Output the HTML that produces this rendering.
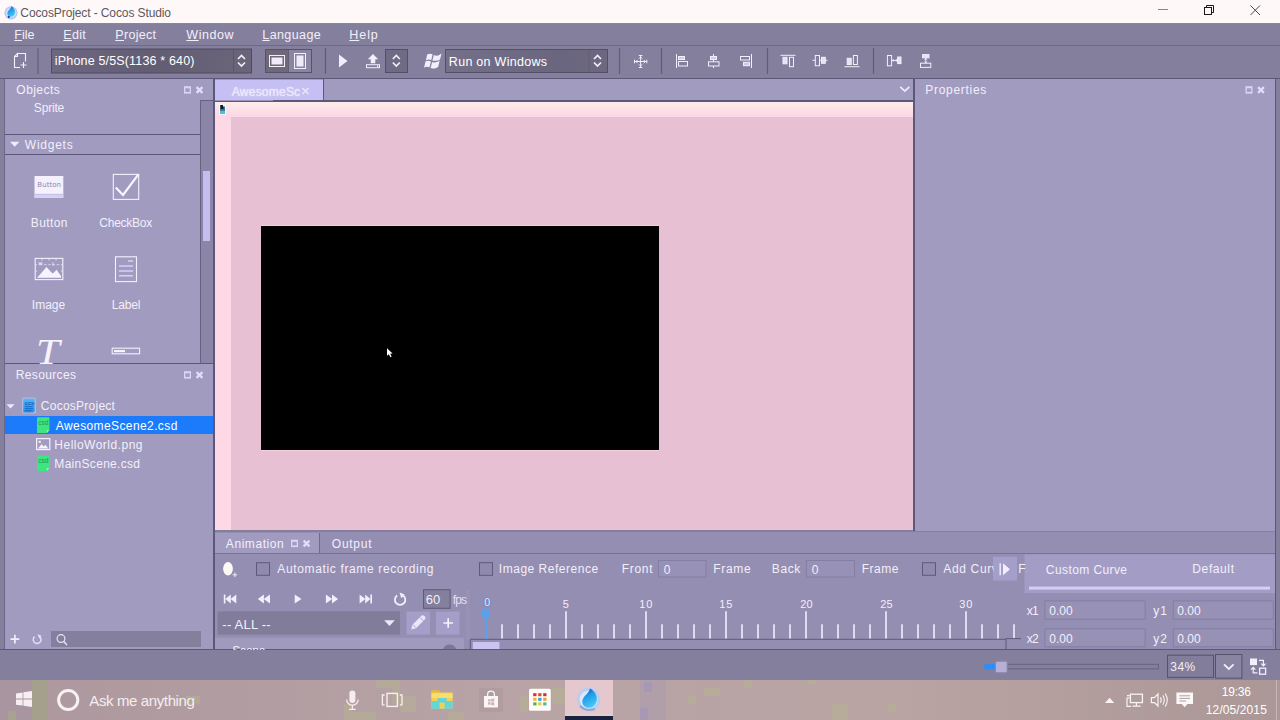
<!DOCTYPE html>
<html><head><meta charset="utf-8"><title>CocosProject - Cocos Studio</title>
<style>
html,body{margin:0;padding:0;}
body{width:1280px;height:720px;position:relative;overflow:hidden;background:#857f9e;font-family:"Liberation Sans",sans-serif;}
.b{position:absolute;}
.t{position:absolute;white-space:nowrap;}
svg{position:absolute;overflow:visible;}
u{text-decoration:underline;text-underline-offset:1px;}
</style></head><body>
<div class="b" style="left:0px;top:0px;width:1280px;height:23px;background:#fef9f8;"></div>
<div class="b" style="left:0px;top:23px;width:1280px;height:657px;background:#857f9e;"></div>
<div class="b" style="left:0px;top:23px;width:1280px;height:1px;background:#8c8694;"></div>
<div class="b" style="left:0px;top:45px;width:1280px;height:1px;background:#6f6988;"></div>
<div class="b" style="left:0px;top:78px;width:1280px;height:1px;background:#5d5779;"></div>
<div class="b" style="left:5px;top:79px;width:209px;height:284px;background:#a19bc0;"></div>
<div class="b" style="left:200px;top:100.4px;width:13px;height:262.6px;background:#8b85a8;box-shadow:inset 1px 1px 0 #676182;"></div>
<div class="b" style="left:203px;top:171px;width:7px;height:70px;background:#c4bdf0;"></div>
<div class="b" style="left:213px;top:79px;width:2px;height:570px;background:#5d5779;"></div>
<div class="b" style="left:4px;top:79px;width:1px;height:570px;background:#6d6789;"></div>
<div class="b" style="left:5px;top:134px;width:195px;height:1px;background:#5d5779;"></div>
<div class="b" style="left:5px;top:154px;width:195px;height:1px;background:#5d5779;"></div>
<div class="b" style="left:5px;top:363px;width:209px;height:1px;background:#5d5779;"></div>
<div class="b" style="left:5px;top:364px;width:208px;height:285px;background:#a19bc0;"></div>
<div class="b" style="left:5px;top:416.2px;width:208.4px;height:18.2px;background:#1b7bfb;"></div>
<div class="b" style="left:51px;top:631px;width:150px;height:16px;background:#857f9e;"></div>
<div class="b" style="left:0px;top:649px;width:1280px;height:1px;background:#5d5779;"></div>
<div class="b" style="left:215px;top:79px;width:699px;height:22px;background:#a19bc0;"></div>
<div class="b" style="left:215px;top:79.6px;width:108.4px;height:20.4px;background:#c6bff3;"></div>
<div class="b" style="left:323px;top:79px;width:1px;height:21px;background:#5d5779;"></div>
<div class="b" style="left:215px;top:100px;width:699px;height:1.7px;background:#5d5779;"></div>
<div class="b" style="left:215px;top:100px;width:58px;height:1px;background:#9a94bd;"></div>
<div class="b" style="left:215px;top:101.6px;width:698.2px;height:428.6px;background:#fbd6e2;background:linear-gradient(#feecea,#fcd9e4 13px);"></div>
<div class="b" style="left:230.5px;top:117.3px;width:682.7px;height:412.9px;background:#e8c0d4;"></div>
<div class="b" style="left:261px;top:226px;width:397.6px;height:223.7px;background:#000;"></div>
<div class="b" style="left:261px;top:225px;width:397.6px;height:1px;background:#f3cfe0;"></div>
<div class="b" style="left:261px;top:449.7px;width:397.6px;height:1px;background:#f3cfe0;"></div>
<div class="b" style="left:913px;top:79px;width:1.6px;height:452px;background:#5d5779;"></div>
<div class="b" style="left:214px;top:531.6px;width:1062px;height:1.1px;background:#645e81;"></div>
<div class="b" style="left:914.6px;top:79px;width:360.4px;height:452.2px;background:#a19bc0;"></div>
<div class="b" style="left:1275px;top:79px;width:1px;height:570px;background:#5d5779;"></div>
<div class="b" style="left:215px;top:532px;width:1060px;height:117px;background:#948eb2;"></div>
<div class="b" style="left:215px;top:532.6px;width:104px;height:20.4px;background:#a19bc0;"></div>
<div class="b" style="left:319px;top:532.6px;width:1px;height:20.4px;background:#6f698d;"></div>
<div class="b" style="left:215px;top:553px;width:1060px;height:1px;background:#787296;"></div>
<div class="b" style="left:0px;top:680px;width:1280px;height:40px;background:#ae999d;background:linear-gradient(90deg,#ac989e 0%,#b29da2 22%,#b8a3a6 40%,#b9a3a3 70%,#b29d9d 86%,#ab9795 100%);"></div>
<svg width="1280" height="720" viewBox="0 0 1280 720" style="left:0;top:0"><defs><linearGradient id="fl" x1="0" y1="0" x2="0.4" y2="1"><stop offset="0" stop-color="#1438a8"/><stop offset="0.45" stop-color="#1f9be8"/><stop offset="1" stop-color="#43c6f5"/></linearGradient><radialGradient id="rg" cx="0.5" cy="0.5" r="0.5"><stop offset="0.55" stop-color="#dfe8fb"/><stop offset="1" stop-color="#a9bff0"/></radialGradient></defs>
<circle cx="11" cy="12.8" r="6.6" fill="url(#rg)"/>
<path d="M11.5 6.2C14.5 8 15.6 11 14.8 13.6C14 16.2 11.6 17.3 9.6 16.6C7.4 15.8 6.8 13.4 7.8 11.6C8.7 10 10.8 8.8 11.5 6.2Z" fill="url(#fl)"/>
<circle cx="8.8" cy="17" r="1.1" fill="#1a2f8f"/>
<path d="M1158 9.5L1168 9.5" stroke="#8b8689" stroke-width="1" fill="none"/>
<rect x="1204.5" y="7.5" width="7" height="7" fill="none" stroke="#1a1a1a" stroke-width="1"/>
<path d="M1206.5 7.5V5.5H1213.5V12.5H1211.5" fill="none" stroke="#1a1a1a" stroke-width="1" />
<path d="M1250.5 5.5L1260 15M1260 5.5L1250.5 15" fill="none" stroke="#4a4648" stroke-width="1" />
<path d="M17.5 53.5H25.5V61.5M20 67.5H14.5V56.5L17.5 53.5V56.5H14.5" fill="none" stroke="#f2eefb" stroke-width="1.1" />
<path d="M20.5 65H26.5M23.5 62V68" fill="none" stroke="#f2eefb" stroke-width="1.1" />
<path d="M38 48L38 74" stroke="#625c7c" stroke-width="1.2" fill="none"/>
<path d="M325.5 48L325.5 74" stroke="#625c7c" stroke-width="1.2" fill="none"/>
<path d="M619.5 48L619.5 74" stroke="#625c7c" stroke-width="1.2" fill="none"/>
<path d="M661.5 48L661.5 74" stroke="#625c7c" stroke-width="1.2" fill="none"/>
<path d="M767.5 48L767.5 74" stroke="#625c7c" stroke-width="1.2" fill="none"/>
<path d="M873.5 48L873.5 74" stroke="#625c7c" stroke-width="1.2" fill="none"/>
<rect x="51" y="48.5" width="201" height="25" fill="#4f4a61"/>
<rect x="52" y="49.5" width="199" height="23" fill="url(#dd)"/>
<defs><linearGradient id="dd" x1="0" y1="0" x2="1" y2="0"><stop offset="0" stop-color="#6d6882"/><stop offset="0.5" stop-color="#625d73"/><stop offset="1" stop-color="#6a6579"/></linearGradient></defs>
<path d="M233.5 49.5L233.5 72.5" stroke="#5a556a" stroke-width="1" fill="none"/>
<path d="M238 59L241.5 55.5L245 59M238 62.5L241.5 66L245 62.5" fill="none" stroke="#f2eefb" stroke-width="1.7" />
<rect x="265" y="49" width="47" height="24" fill="#57526b"/>
<rect x="266" y="50" width="22.5" height="22" fill="#6e6878"/>
<rect x="289" y="50" width="22" height="22" fill="#8a85a1"/>
<rect x="269.5" y="55.5" width="15" height="11" fill="none" stroke="#f2eefb" stroke-width="1"/>
<rect x="271.5" y="57.5" width="11" height="7" fill="#efebfb"/>
<rect x="294.5" y="53.5" width="11" height="15" fill="none" stroke="#f2eefb" stroke-width="1"/>
<rect x="296.5" y="55.5" width="7" height="11" fill="#efebfb"/>
<path d="M339 54.5L347.5 61L339 67.5Z" fill="#f2eefb" stroke="none" stroke-width="0" />
<path d="M373 54L378.2 59.2H375.3V63.2H370.7V59.2H367.8Z" fill="#f2eefb" stroke="none" stroke-width="0" />
<rect x="366.5" y="64.7" width="13" height="3" fill="none" stroke="#f2eefb" stroke-width="1"/>
<rect x="377" y="65.5" width="1.2" height="1.5" fill="#f2eefb"/>
<rect x="385" y="49" width="23" height="24" fill="#544f69"/>
<rect x="386" y="50" width="21" height="22" fill="#706b85"/>
<path d="M392.8 59L396.3 55.5L399.8 59M392.8 62.5L396.3 66L399.8 62.5" fill="none" stroke="#f2eefb" stroke-width="1.7" />
<path d="M427.2 54.6C429 53.4 431 53.4 432.6 54.4L431.2 60.2C429.6 59.2 427.6 59.2 425.8 60.4Z" fill="#f2eefb" stroke="none" stroke-width="0" />
<path d="M433.8 54.9C435.6 55.9 437.6 55.9 439.6 54.7L441.6 53.4L440 59.4C438 60.8 436 60.8 432.4 60.7Z" fill="#f2eefb" stroke="none" stroke-width="0" />
<path d="M425.5 61.6C427.3 60.4 429.3 60.4 430.9 61.4L429.4 67.6C427.8 66.6 425.8 66.6 424 67.8Z" fill="#f2eefb" stroke="none" stroke-width="0" />
<path d="M432.1 61.9C433.9 62.9 436 62.9 439.7 60.6L438.2 66.8C436.2 68.4 434.2 69.2 430.6 68Z" fill="#f2eefb" stroke="none" stroke-width="0" />
<rect x="445" y="49" width="163" height="24" fill="#544f69"/>
<rect x="446" y="50" width="161" height="22" fill="url(#dd2)"/>
<defs><linearGradient id="dd2" x1="0" y1="0" x2="1" y2="0"><stop offset="0" stop-color="#75708a"/><stop offset="0.7" stop-color="#6b667f"/><stop offset="1" stop-color="#6d687f"/></linearGradient></defs>
<path d="M589 50L589 72" stroke="#625d74" stroke-width="1" fill="none"/>
<path d="M594 59L597.5 55.5L601 59M594 62.5L597.5 66L601 62.5" fill="none" stroke="#f2eefb" stroke-width="1.7" />
<path d="M640.6 55.5V67.5M634.5 61.5H646.8" fill="none" stroke="#f2eefb" stroke-width="1" />
<path d="M638.8 55.5H642.4M638.8 67.5H642.4M634.5 59.7V63.3M646.8 59.7V63.3" fill="none" stroke="#f2eefb" stroke-width="1" />
<path d="M639 58.6L640.6 57L642.2 58.6M639 64.4L640.6 66L642.2 64.4M637.6 59.9L636 61.5L637.6 63.1M643.7 59.9L645.3 61.5L643.7 63.1" fill="none" stroke="#f2eefb" stroke-width="1" />
<path d="M676.5 54L676.5 68" stroke="#f2eefb" stroke-width="1" fill="none"/>
<rect x="678.5" y="56.5" width="6" height="3" fill="#cfc9ea" stroke="#f2eefb" stroke-width="1"/>
<rect x="678.5" y="61.5" width="9" height="4.5" fill="none" stroke="#f2eefb" stroke-width="1"/>
<path d="M713.5 54L713.5 68" stroke="#f2eefb" stroke-width="1" fill="none"/>
<rect x="710.5" y="56.5" width="6" height="3" fill="#cfc9ea" stroke="#f2eefb" stroke-width="1"/>
<rect x="708.5" y="61.8" width="10.5" height="4.2" fill="#857f9e" stroke="#f2eefb" stroke-width="1"/>
<path d="M751.5 54L751.5 68" stroke="#f2eefb" stroke-width="1" fill="none"/>
<rect x="740.5" y="56.5" width="9" height="3.5" fill="none" stroke="#f2eefb" stroke-width="1"/>
<rect x="743.5" y="62.3" width="6" height="3.4" fill="#cfc9ea" stroke="#f2eefb" stroke-width="1"/>
<path d="M780.5 55.3L795.5 55.3" stroke="#f2eefb" stroke-width="1" fill="none"/>
<rect x="783" y="57.3" width="4" height="6.5" fill="#e6e1f8" stroke="#f2eefb" stroke-width="1"/>
<rect x="789.5" y="57.3" width="4" height="9.4" fill="none" stroke="#f2eefb" stroke-width="1"/>
<path d="M812.5 60.3L827.5 60.3" stroke="#f2eefb" stroke-width="1" fill="none"/>
<rect x="815.3" y="55.5" width="4.2" height="10.2" fill="#857f9e" stroke="#f2eefb" stroke-width="1"/>
<rect x="821.5" y="57.3" width="3.8" height="6" fill="#e6e1f8" stroke="#f2eefb" stroke-width="1"/>
<path d="M844.5 66.7L859.5 66.7" stroke="#f2eefb" stroke-width="1" fill="none"/>
<rect x="847.2" y="58.3" width="4" height="6.2" fill="#e6e1f8" stroke="#f2eefb" stroke-width="1"/>
<rect x="853.4" y="55.5" width="4" height="9" fill="none" stroke="#f2eefb" stroke-width="1"/>
<rect x="887.4" y="55.5" width="4.2" height="10.3" fill="none" stroke="#f2eefb" stroke-width="1"/>
<rect x="897.6" y="57" width="3.4" height="6.6" fill="#e6e1f8" stroke="#f2eefb" stroke-width="1"/>
<path d="M892 60.4L897.5 60.4" stroke="#f2eefb" stroke-width="1" fill="none"/>
<path d="M893.5 59L892.5 60.4L893.5 61.8M896 59L897 60.4L896 61.8" fill="none" stroke="#f2eefb" stroke-width="0.8" />
<rect x="922.6" y="54.6" width="6.4" height="3.2" fill="#e6e1f8" stroke="#f2eefb" stroke-width="1"/>
<rect x="920.5" y="63.2" width="10.3" height="4.2" fill="none" stroke="#f2eefb" stroke-width="1"/>
<path d="M925.8 58L925.8 63" stroke="#f2eefb" stroke-width="1" fill="none"/>
<path d="M924.4 59.6L925.8 58.6L927.2 59.6M924.4 61.8L925.8 62.8L927.2 61.8" fill="none" stroke="#f2eefb" stroke-width="0.8" /><rect x="184" y="86.2" width="7" height="7.4" fill="#dad4f6"/><rect x="185.3" y="88.3" width="4.4" height="3.6" fill="#a39dc3"/>
<path d="M196.6 87.1L202.4 92.9M202.4 87.1L196.6 92.9" stroke="#e2dcf8" stroke-width="2.3" fill="none"/>
<rect x="184" y="371.2" width="7" height="7.4" fill="#dad4f6"/><rect x="185.3" y="373.3" width="4.4" height="3.6" fill="#a39dc3"/>
<path d="M196.6 372.1L202.4 377.9M202.4 372.1L196.6 377.9" stroke="#e2dcf8" stroke-width="2.3" fill="none"/>
<rect x="1245.5" y="86.2" width="7" height="7.4" fill="#dad4f6"/><rect x="1246.8" y="88.3" width="4.4" height="3.6" fill="#a39dc3"/>
<path d="M1258.1 87.1L1263.9 92.9M1263.9 87.1L1258.1 92.9" stroke="#e2dcf8" stroke-width="2.3" fill="none"/>
<rect x="291" y="539.7" width="7" height="7.4" fill="#dad4f6"/><rect x="292.3" y="541.8" width="4.4" height="3.6" fill="#a39dc3"/>
<path d="M303.6 540.6L309.4 546.4M309.4 540.6L303.6 546.4" stroke="#e2dcf8" stroke-width="2.3" fill="none"/>
<path d="M302.5 88L308.5 94M308.5 88L302.5 94" stroke="#e8e4f8" stroke-width="1.6" fill="none"/>
<path d="M900.3 86.8L904.8 91L909.3 86.8" stroke="#eeeafb" stroke-width="1.7" fill="none"/>
<rect x="219" y="104" width="7" height="11" fill="#fff" opacity="0.55"/><rect x="220" y="105" width="5" height="9" fill="#3b7a9c"/><rect x="220.6" y="105" width="3" height="4" fill="#0d1c2c"/><rect x="220" y="111" width="5" height="3" fill="#4cc1dd"/><rect x="223" y="104.5" width="2" height="2" fill="#e8f4fa"/>
<path d="M10 141.7H19.4L14.7 146.7Z" fill="#f0ecfb"/>
<rect x="34.5" y="176" width="28.8" height="21.8" fill="#f4f0fd"/><rect x="34.5" y="194.6" width="28.8" height="3.2" fill="#d6cff6"/><rect x="34.5" y="193.9" width="28.8" height="0.8" fill="#b9b2e2"/>
<rect x="113.3" y="174.4" width="25.4" height="25" fill="none" stroke="#f4f0fd" stroke-width="1.1"/><path d="M115.8 187.6L123 195L138.6 174.2" fill="none" stroke="#f8f5ff" stroke-width="2.2"/>
<rect x="35.2" y="258.4" width="27.6" height="21.2" fill="none" stroke="#f4f0fd" stroke-width="1.1"/>
<path d="M37 277.8L40 274.4L46.5 267L51 272L53 273.4L56.5 269.8L61 276V277.8Z" fill="#f6f3ff"/>
<rect x="38.6" y="262.4" width="3.8" height="2.8" fill="#dcd6f5"/><path d="M44 264.6H61" stroke="#d9d3f3" stroke-width="0.9" stroke-dasharray="2.6 1.6" fill="none"/>
<path d="M42 258.4V260.4M49 258.4V260.4M56 258.4V260.4M35.2 264.8H37M35.2 271H37M61 264.8H62.8M61 271H62.8M53 262.5V266" stroke="#e9e5fa" stroke-width="0.9" fill="none"/>
<rect x="115.5" y="256.8" width="21" height="24.8" fill="none" stroke="#f4f0fd" stroke-width="1.1"/>
<path d="M128 261H133M119 266H133M119 271H133M119 275.7H133" stroke="#d7d0f8" stroke-width="1.6" fill="none"/>
<rect x="112.2" y="348.2" width="27.4" height="5.6" fill="none" stroke="#f4f0fd" stroke-width="1.1"/><rect x="114" y="350" width="11" height="2.2" fill="#f6f3ff"/>
<path d="M6.5 404.3L14.5 404.3L10.5 408.4Z" fill="#eeeafa"/>
<defs><linearGradient id="pj" x1="0" y1="0" x2="0" y2="1"><stop offset="0" stop-color="#56b6f7"/><stop offset="1" stop-color="#1f8eea"/></linearGradient></defs>
<rect x="22" y="397.6" width="14" height="16" rx="1" fill="#b5bfe8" opacity="0.75"/><path d="M23.3 398.8H34.6V411.2L33 412.6H23.3Z" fill="url(#pj)"/>
<path d="M25 406.6H33M25 408.6H33M25 410.6H31.5" stroke="#1668c4" stroke-width="0.9" fill="none"/>
<path d="M37 417.3H49.4V429.90000000000003L46.8 432.90000000000003H37Z" fill="#3de47f"/><path d="M49.4 429.90000000000003L46.8 432.90000000000003V429.90000000000003Z" fill="#9bf2bd"/>
<path d="M37 455.5H49.4V468.1L46.8 471.1H37Z" fill="#3de47f"/><path d="M49.4 468.1L46.8 471.1V468.1Z" fill="#9bf2bd"/>
<rect x="36.6" y="438.6" width="13.2" height="11" fill="none" stroke="#f4f0fd" stroke-width="1.2"/><path d="M38 448.4L41.6 444.2L43.8 446.4L45.4 444.8L48.4 448.4Z" fill="#f6f3ff"/><rect x="38.6" y="440.8" width="2.2" height="2" fill="#f6f3ff"/>
<path d="M10.5 639.2H19.3M14.9 634.8V643.6" stroke="#f2eefb" stroke-width="1.7" fill="none"/>
<path d="M34.6 636.6A3.9 3.9 0 1 0 40 637" stroke="#e6e1f8" stroke-width="1.4" fill="none"/><path d="M37.4 634.2L41.4 635.4L39.4 638.8Z" fill="#e6e1f8"/>
<circle cx="61" cy="638.6" r="3.9" fill="none" stroke="#e8e4f8" stroke-width="1.2"/><path d="M63.8 641.6L67 645" stroke="#e8e4f8" stroke-width="1.4" fill="none"/>
<path d="M387 348.3L387 355.8L388.8 354.2L390.4 357.2L391.6 356.6L390.2 353.8L392.6 353.6Z" fill="#fdfdfd"/><ellipse cx="228" cy="568.8" rx="4.9" ry="6.7" fill="#fbf8f6"/><path d="M232.6 574.8H237.2M234.9 572.5V577.1" stroke="#f2eefb" stroke-width="1" fill="none"/>
<rect x="256.5" y="562.7" width="13" height="12.6" fill="#908aae" stroke="#5f5a79" stroke-width="1"/>
<rect x="479.5" y="562.7" width="13" height="12.6" fill="#908aae" stroke="#5f5a79" stroke-width="1"/>
<rect x="922.5" y="562.7" width="13" height="12.6" fill="#908aae" stroke="#5f5a79" stroke-width="1"/>
<rect x="658.5" y="560.5" width="47.5" height="16.5" fill="#9791b6" stroke="#847ea5" stroke-width="1"/>
<rect x="806.5" y="560.5" width="48" height="16.5" fill="#9791b6" stroke="#847ea5" stroke-width="1"/>
<rect x="993" y="556.6" width="24" height="24" fill="#a49eca"/><path d="M1000.2 563.3V575.2" stroke="#f2eefb" stroke-width="1.4" fill="none"/><path d="M1003 563.2L1010 569.2L1003 575.2Z" fill="#f2eefb"/>
<path d="M223.8 594.6H225.4V603.4H223.8ZM230.8 594.6L225.4 599L230.8 603.4ZM236.3 594.6L230.6 599L236.3 603.4ZM263.9 594.6L257.8 599L263.9 603.4ZM270 594.6L263.7 599L270 603.4ZM294.7 594.6L301.5 599L294.7 603.4ZM325.9 594.6L332.1 599L325.9 603.4ZM332 594.6L338.1 599L332 603.4ZM359.6 594.6L365.4 599L359.6 603.4ZM365.2 594.6L370.4 599L365.2 603.4ZM370.4 594.6H372V603.4H370.4Z" fill="#f2eefb"/>
<path d="M397.2 595.4A5.2 5.2 0 1 0 403 595.4" stroke="#f2eefb" stroke-width="1.8" fill="none"/><path d="M399.6 592.6L404.6 594.4L401.2 598.2Z" fill="#f2eefb"/>
<rect x="423.5" y="589.7" width="26.6" height="18.6" fill="#857f9e" stroke="#5f5a78" stroke-width="1"/>
<rect x="217.6" y="611.4" width="182.4" height="23.2" fill="#827c9b"/><path d="M384.2 620.2H394.8L389.5 626Z" fill="#ebe7fa"/>
<rect x="406.5" y="611.5" width="23.6" height="23.1" fill="#a49ec9"/><rect x="436" y="611.5" width="23.6" height="23.1" fill="#a49ec9"/>
<path d="M411.2 629.4L412.6 624.6L421.6 615.6Q423 614.6 424.4 616L425 616.6Q426 618 425 619.2L416 628.2Z" fill="#e9e5fa"/><path d="M420 617.4L423.4 620.8" stroke="#a49ec9" stroke-width="1" fill="none"/><path d="M413 624.6L416 627.8" stroke="#a49ec9" stroke-width="0.8" fill="none"/>
<path d="M443.4 623H453M448.2 618.2V627.8" stroke="#f6f3ff" stroke-width="1.7" fill="none"/>
<rect x="215" y="637.8" width="249" height="11.2" fill="#a09abf"/>
<path d="M443.1 649A6.9 6.9 0 0 1 456.1 649Z" fill="#7d7796"/>
<path d="M467 590V640M469 591V640" stroke="#a7a1c6" stroke-width="1" stroke-dasharray="1 1.4" fill="none"/>
<path d="M486 611.3V638.8M502 624.2V638.8M518 624.2V638.8M534 624.2V638.8M550 624.2V638.8M566 611.3V638.8M582 624.2V638.8M598 624.2V638.8M614 624.2V638.8M630 624.2V638.8M646 611.3V638.8M662 624.2V638.8M678 624.2V638.8M694 624.2V638.8M710 624.2V638.8M726 611.3V638.8M742 624.2V638.8M758 624.2V638.8M774 624.2V638.8M790 624.2V638.8M806 611.3V638.8M822 624.2V638.8M838 624.2V638.8M854 624.2V638.8M870 624.2V638.8M886 611.3V638.8M902 624.2V638.8M918 624.2V638.8M934 624.2V638.8M950 624.2V638.8M966 611.3V638.8M982 624.2V638.8M998 624.2V638.8M1014 624.2V638.8" stroke="#ece8fb" stroke-width="1.7" fill="none"/>
<path d="M470.3 649V639.3H1006M1006 649V638.6H1021" stroke="#5f5a79" stroke-width="1" fill="none"/>
<rect x="472.8" y="642" width="26.6" height="7" fill="#cbc4f2"/>
<rect x="484.8" y="616" width="2.6" height="23" fill="#5f9fe6"/><rect x="482" y="608.8" width="8" height="8.4" rx="1" fill="#5aa0ea"/>
<rect x="1024.5" y="554.5" width="250.5" height="38.7" fill="#a39dc5"/><rect x="1029" y="586.6" width="241" height="3" fill="#d5cff8"/>
<rect x="1044.9" y="600.9" width="100.2" height="18.2" fill="#9791b6" stroke="#847ea5" stroke-width="1"/>
<rect x="1173.3" y="600.9" width="100" height="18.2" fill="#9791b6" stroke="#847ea5" stroke-width="1"/>
<rect x="1044.9" y="628.8" width="100.2" height="18" fill="#9791b6" stroke="#847ea5" stroke-width="1"/>
<rect x="1173.3" y="628.8" width="100" height="18" fill="#9791b6" stroke="#847ea5" stroke-width="1"/>
<rect x="1000" y="664.3" width="158.5" height="4.6" fill="#857f9e" stroke="#68627f" stroke-width="1"/>
<rect x="984" y="664" width="14" height="5.6" rx="2.6" fill="#2f8df6"/>
<rect x="995.5" y="661.3" width="11.6" height="11.4" rx="1.5" fill="#b6b0d5" stroke="#8c86b3" stroke-width="1"/>
<rect x="1167.5" y="655.2" width="46" height="22.2" fill="#837d9c" stroke="#56516c" stroke-width="1"/>
<rect x="1215.5" y="654.5" width="26.4" height="23.6" fill="#8a84a3" stroke="#56516c" stroke-width="1"/><path d="M1224 664.4L1228.8 669L1233.6 664.4" stroke="#f2eefb" stroke-width="1.8" fill="none"/>
<rect x="1250" y="658.5" width="7" height="6.6" fill="#f2eefb"/><rect x="1259.6" y="668.2" width="6" height="6" fill="none" stroke="#f2eefb" stroke-width="1.3"/>
<path d="M1259 660.4H1263.4V665.4M1261.2 663.6L1263.4 665.8L1265.6 663.6M1257.4 672.8H1253.2V667.6M1251 669.6L1253.2 667.4L1255.4 669.6" stroke="#f2eefb" stroke-width="1.2" fill="none"/>
<rect x="0" y="680" width="32" height="40" fill="#a9959f"/><rect x="32" y="680" width="16" height="40" fill="#a5a08c"/><rect x="8" y="711" width="8" height="9" fill="#a8a38e"/>
<rect x="376" y="680" width="24" height="8" fill="#b6b093" opacity="0.6"/>
<rect x="392" y="688" width="8" height="16" fill="#b6b093" opacity="0.6"/>
<rect x="400" y="696" width="16" height="16" fill="#b6b093" opacity="0.6"/>
<rect x="344" y="704" width="8" height="16" fill="#b6b093" opacity="0.6"/>
<rect x="352" y="712" width="24" height="8" fill="#b6b093" opacity="0.6"/>
<rect x="448" y="712" width="16" height="8" fill="#b6b093" opacity="0.6"/>
<rect x="520" y="696" width="8" height="16" fill="#b6b093" opacity="0.6"/>
<rect x="552" y="688" width="16" height="16" fill="#b6b093" opacity="0.6"/>
<rect x="744" y="680" width="8" height="8" fill="#b6b093" opacity="0.6"/>
<rect x="704" y="688" width="16" height="8" fill="#b6b093" opacity="0.6"/>
<rect x="688" y="696" width="8" height="8" fill="#b6b093" opacity="0.6"/>
<rect x="832" y="704" width="16" height="16" fill="#b6b093" opacity="0.6"/>
<rect x="888" y="704" width="8" height="8" fill="#b6b093" opacity="0.6"/>
<rect x="808" y="680" width="8" height="4" fill="#b6b093" opacity="0.6"/>
<rect x="186" y="696" width="14" height="8" fill="#b6b093" opacity="0.6"/>
<rect x="640" y="680" width="26" height="40" fill="#a094b4" opacity="0.35"/><rect x="644" y="682" width="8" height="10" fill="#9a90c0" opacity="0.45"/><rect x="640" y="708" width="8" height="12" fill="#9a90c0" opacity="0.4"/>
<path d="M16 693.4L22.6 692.4V698.6H16ZM23.4 692.3L32 691V698.6H23.4ZM16 699.4H22.6V705.6L16 704.7ZM23.4 699.4H32V707L23.4 705.7Z" fill="#f7eef2"/>
<circle cx="68.2" cy="700" r="9.6" fill="none" stroke="#f9f1f3" stroke-width="3"/>
<rect x="349.4" y="690.6" width="6" height="12.4" rx="3" fill="#f5ecef"/><path d="M346.6 699.4A5.8 5.8 0 0 0 358.2 699.4M352.4 705.2V709M349 709.4H355.8" stroke="#f5ecef" stroke-width="1.3" fill="none"/>
<rect x="387" y="693.4" width="10.4" height="13" fill="none" stroke="#f7eff1" stroke-width="1.4"/><path d="M384.6 695H382.4V704.8H384.6M399.8 695H402V704.8H399.8" stroke="#f7eff1" stroke-width="1.3" fill="none"/>
<path d="M431.4 690.4H438.6L440.4 692.4H452.6V708.6H431.4Z" fill="#f5d04f"/><path d="M431.4 690.4H438.6L440.4 692.4H431.4Z" fill="#e6b73a"/><rect x="431.4" y="701" width="21.2" height="7.6" fill="#63d6dc"/><rect x="437.6" y="698" width="9" height="10.6" fill="#63d6dc"/><rect x="439.6" y="702.6" width="5" height="6" fill="#f5d04f"/><rect x="431.4" y="693.4" width="21.2" height="4.6" fill="#f9dd6e"/>
<rect x="479" y="688" width="24" height="24" fill="#a8959c" opacity="0.45"/>
<path d="M484 696H498V706.4Q498 707.6 496.8 707.6H485.2Q484 707.6 484 706.4Z" fill="#fbf6f6"/><path d="M487.6 696.4V694.6A3.4 3.4 0 0 1 494.4 694.6V696.4" stroke="#fbf6f6" stroke-width="1.3" fill="none"/><path d="M488 699.4L490.6 699V701.6H488ZM491.2 698.9L494.2 698.4V701.6H491.2ZM488 702.2H490.6V704.8L488 704.4ZM491.2 702.2H494.2V705.4L491.2 704.9Z" fill="#cdb4b8"/>
<rect x="529" y="688.8" width="21.8" height="22" rx="1.5" fill="#fdfaf8"/>
<rect x="533.2" y="693.2" width="3.3" height="3" fill="#d9322e"/>
<rect x="538.2" y="693.2" width="3.3" height="3" fill="#e0482f"/>
<rect x="543.2" y="693.2" width="3.3" height="3" fill="#c53540"/>
<rect x="533.2" y="697.8000000000001" width="3.3" height="3" fill="#efb22f"/>
<rect x="538.2" y="697.8000000000001" width="3.3" height="3" fill="#35a0d8"/>
<rect x="543.2" y="697.8000000000001" width="3.3" height="3" fill="#e0a434"/>
<rect x="533.2" y="702.4000000000001" width="3.3" height="3" fill="#52b24a"/>
<rect x="538.2" y="702.4000000000001" width="3.3" height="3" fill="#e8c936"/>
<rect x="543.2" y="702.4000000000001" width="3.3" height="3" fill="#48b8a0"/>
<rect x="565" y="680" width="48" height="40" fill="#e4c8ce"/><rect x="565" y="714.4" width="48" height="2" fill="#d9d6c8"/><rect x="565" y="716" width="48" height="4" fill="#1b2140"/>
<circle cx="588.6" cy="699.4" r="11.6" fill="#b9cdf3"/><circle cx="588.6" cy="699.4" r="9" fill="#dbe6fa"/><path d="M590 688.6C596 692 598 697.4 596.4 702C594.8 706.8 590.4 708.6 586.6 707.4C582.6 706 581.4 701.8 583.2 698.4C584.8 695.6 588.6 693.4 590 688.6Z" fill="url(#fl)"/><path d="M580 706Q586 712 595 709" stroke="#8fa6d8" stroke-width="2.2" fill="none"/>
<path d="M1105 703L1109.6 697.8L1114.2 703Z" fill="#f9f3f4"/>
<rect x="1130.4" y="694.2" width="12" height="8.4" fill="none" stroke="#f9f3f4" stroke-width="1.3"/><path d="M1136.4 702.8V706M1132.4 706.2H1140.6M1130.4 698H1127V706.4H1131M1127 695.6H1129.6" stroke="#f9f3f4" stroke-width="1.2" fill="none"/>
<path d="M1151.4 697.6H1154.4L1158 694V706L1154.4 702.6H1151.4Z" fill="none" stroke="#f9f3f4" stroke-width="1.2"/><path d="M1160.4 697.4Q1162.2 700 1160.4 702.8M1162.8 695.4Q1165.8 700 1162.8 704.8M1165.2 693.6Q1169.4 700 1165.2 706.6" stroke="#f9f3f4" stroke-width="1.1" fill="none"/>
<path d="M1176.4 692.4H1193V704H1187.4L1184.6 707.2L1181.8 704H1176.4Z" fill="#fbf7f7"/><path d="M1179.4 695.8H1190M1179.4 698.4H1190M1179.4 701H1186" stroke="#a8959b" stroke-width="0.9" fill="none"/>
<rect x="1276" y="680" width="1" height="40" fill="#c6b6b8"/></svg>
<span class="t" style="left:20.35px;top:4.50px;font-size:12px;line-height:16px;color:#5d575e;letter-spacing:-0.104px;">CocosProject - Cocos Studio</span>
<span class="t" style="left:14.35px;top:26.95px;font-size:12.5px;line-height:16.5px;color:#f3effa;"><u>F</u>ile</span>
<span class="t" style="left:63.35px;top:26.95px;font-size:12.5px;line-height:16.5px;color:#f3effa;letter-spacing:0.300px;"><u>E</u>dit</span>
<span class="t" style="left:115.35px;top:26.95px;font-size:12.5px;line-height:16.5px;color:#f3effa;letter-spacing:0.300px;"><u>P</u>roject</span>
<span class="t" style="left:186.35px;top:26.95px;font-size:12.5px;line-height:16.5px;color:#f3effa;letter-spacing:0.540px;"><u>W</u>indow</span>
<span class="t" style="left:262.35px;top:26.95px;font-size:12.5px;line-height:16.5px;color:#f3effa;letter-spacing:0.386px;"><u>L</u>anguage</span>
<span class="t" style="left:349.35px;top:26.95px;font-size:12.5px;line-height:16.5px;color:#f3effa;letter-spacing:0.900px;"><u>H</u>elp</span>
<span class="t" style="left:16.35px;top:82.00px;font-size:12px;line-height:16px;color:#f3effa;letter-spacing:0.450px;">Objects</span>
<span class="t" style="left:33.85px;top:100.00px;font-size:12px;line-height:16px;color:#f3effa;letter-spacing:-0.180px;">Sprite</span>
<span class="t" style="left:24.85px;top:137.00px;font-size:12px;line-height:16px;color:#f3effa;letter-spacing:0.750px;">Widgets</span>
<span class="t" style="left:30.85px;top:215.00px;font-size:12px;line-height:16px;color:#f3effa;letter-spacing:0.360px;">Button</span>
<span class="t" style="left:99.35px;top:215.00px;font-size:12px;line-height:16px;color:#f3effa;letter-spacing:-0.257px;">CheckBox</span>
<span class="t" style="left:31.85px;top:297.00px;font-size:12px;line-height:16px;color:#f3effa;">Image</span>
<span class="t" style="left:111.85px;top:297.00px;font-size:12px;line-height:16px;color:#f3effa;letter-spacing:-0.225px;">Label</span>
<span class="t" style="left:15.85px;top:367.00px;font-size:12px;line-height:16px;color:#f3effa;letter-spacing:0.338px;">Resources</span>
<span class="t" style="left:40.85px;top:398.00px;font-size:12px;line-height:16px;color:#f3effa;letter-spacing:0.245px;">CocosProject</span>
<span class="t" style="left:55.85px;top:417.50px;font-size:12px;line-height:16px;color:#ffffff;letter-spacing:0.394px;">AwesomeScene2.csd</span>
<span class="t" style="left:54.35px;top:437.00px;font-size:12px;line-height:16px;color:#f3effa;letter-spacing:0.485px;">HelloWorld.png</span>
<span class="t" style="left:54.35px;top:456.00px;font-size:12px;line-height:16px;color:#f3effa;letter-spacing:0.300px;">MainScene.csd</span>
<span class="t" style="left:37.35px;top:179.70px;font-size:7px;line-height:11px;color:#8e88ab;letter-spacing:0.036px;font-family:'DejaVu Sans',sans-serif;">Button</span>
<span class="t" style="left:36.05px;top:332.00px;font-size:36px;line-height:40px;color:#f6f3ff;font-family:'Liberation Serif',serif;font-style:italic;transform:scaleX(1.18);transform-origin:0 0;">T</span>
<span class="t" style="left:24.75px;top:398.00px;font-size:6px;line-height:10px;color:#1463c0;font-weight:bold;letter-spacing:-0.2px;">ccs</span>
<span class="t" style="left:38.35px;top:417.75px;font-size:6.5px;line-height:10.5px;color:#1f9a50;">csd</span>
<span class="t" style="left:38.35px;top:455.95px;font-size:6.5px;line-height:10.5px;color:#1f9a50;">csd</span>
<span class="t" style="left:925.35px;top:82.00px;font-size:12px;line-height:16px;color:#f3effa;letter-spacing:0.700px;">Properties</span>
<span class="t" style="left:231.85px;top:83.50px;font-size:12px;line-height:16px;color:#ece8fa;letter-spacing:0.225px;text-shadow:0 0 1.2px #f4f1ff;">AwesomeSc</span>
<span class="t" style="left:225.85px;top:535.50px;font-size:12px;line-height:16px;color:#f3effa;letter-spacing:0.562px;">Animation</span>
<span class="t" style="left:331.85px;top:535.50px;font-size:12px;line-height:16px;color:#f3effa;letter-spacing:0.720px;">Output</span>
<span class="t" style="left:54.85px;top:52.75px;font-size:12.5px;line-height:16.5px;color:#fff;letter-spacing:0.164px;">iPhone 5/5S(1136 * 640)</span>
<span class="t" style="left:448.85px;top:53.75px;font-size:12.5px;line-height:16.5px;color:#fff;letter-spacing:0.277px;">Run on Windows</span>
<span class="t" style="left:277.35px;top:561.00px;font-size:12px;line-height:16px;color:#f3effa;letter-spacing:0.638px;">Automatic frame recording</span>
<span class="t" style="left:498.85px;top:561.00px;font-size:12px;line-height:16px;color:#f3effa;letter-spacing:0.514px;">Image Reference</span>
<span class="t" style="left:621.85px;top:561.00px;font-size:12px;line-height:16px;color:#f3effa;letter-spacing:0.675px;">Front</span>
<span class="t" style="left:663.85px;top:561.50px;font-size:12px;line-height:16px;color:#f3effa;">0</span>
<span class="t" style="left:713.35px;top:561.00px;font-size:12px;line-height:16px;color:#f3effa;letter-spacing:0.675px;">Frame</span>
<span class="t" style="left:771.85px;top:561.00px;font-size:12px;line-height:16px;color:#f3effa;letter-spacing:0.600px;">Back</span>
<span class="t" style="left:811.85px;top:561.50px;font-size:12px;line-height:16px;color:#f3effa;">0</span>
<span class="t" style="left:861.85px;top:561.00px;font-size:12px;line-height:16px;color:#f3effa;letter-spacing:0.450px;">Frame</span>
<span class="t" style="left:943.35px;top:561.00px;font-size:12px;line-height:16px;color:#f3effa;letter-spacing:0.643px;clip-path:inset(0 5px 0 0);">Add Curv</span>
<span class="t" style="left:1018.35px;top:561.00px;font-size:12px;line-height:16px;color:#f3effa;clip-path:inset(0 2.2px 0 0);">Fi</span>
<span class="t" style="left:1045.85px;top:562.00px;font-size:12px;line-height:16px;color:#f3effa;letter-spacing:0.409px;">Custom Curve</span>
<span class="t" style="left:1192.35px;top:561.00px;font-size:12px;line-height:16px;color:#f3effa;letter-spacing:0.600px;">Default</span>
<span class="t" style="left:1026.85px;top:602.50px;font-size:12px;line-height:16px;color:#f3effa;letter-spacing:-0.900px;">x1</span>
<span class="t" style="left:1153.35px;top:602.50px;font-size:12px;line-height:16px;color:#f3effa;letter-spacing:0.900px;">y1</span>
<span class="t" style="left:1026.85px;top:630.50px;font-size:12px;line-height:16px;color:#f3effa;letter-spacing:-0.900px;">x2</span>
<span class="t" style="left:1153.35px;top:630.50px;font-size:12px;line-height:16px;color:#f3effa;letter-spacing:0.900px;">y2</span>
<span class="t" style="left:1049.35px;top:602.50px;font-size:12px;line-height:16px;color:#f3effa;">0.00</span>
<span class="t" style="left:1177.35px;top:602.50px;font-size:12px;line-height:16px;color:#f3effa;">0.00</span>
<span class="t" style="left:1049.35px;top:630.50px;font-size:12px;line-height:16px;color:#f3effa;">0.00</span>
<span class="t" style="left:1177.35px;top:630.50px;font-size:12px;line-height:16px;color:#f3effa;">0.00</span>
<span class="t" style="left:425.85px;top:591.00px;font-size:13px;line-height:17px;color:#f3effa;">60</span>
<span class="t" style="left:452.85px;top:592.00px;font-size:12px;line-height:16px;color:#e4dff5;letter-spacing:-0.900px;">fps</span>
<span class="t" style="left:222.35px;top:615.50px;font-size:13px;line-height:17px;color:#f3effa;letter-spacing:0.225px;">-- ALL --</span>
<span class="t" style="left:232.35px;top:643.00px;font-size:12px;line-height:16px;color:#f3effa;letter-spacing:-0.225px;clip-path:inset(0 0 9px 0);">Scene</span>
<span class="t" style="left:484.35px;top:595.25px;font-size:10.5px;line-height:14.5px;color:#eef2ff;text-shadow:0 0 1.5px #3a6fd0,0 0 1px #4a7fe0;">0</span>
<span class="t" style="left:562.85px;top:597.00px;font-size:11px;line-height:15px;color:#f3effa;">5</span>
<span class="t" style="left:639.35px;top:597.00px;font-size:11px;line-height:15px;color:#f3effa;letter-spacing:0.900px;">10</span>
<span class="t" style="left:719.35px;top:597.00px;font-size:11px;line-height:15px;color:#f3effa;letter-spacing:0.900px;">15</span>
<span class="t" style="left:800.35px;top:597.00px;font-size:11px;line-height:15px;color:#f3effa;">20</span>
<span class="t" style="left:880.35px;top:597.00px;font-size:11px;line-height:15px;color:#f3effa;">25</span>
<span class="t" style="left:959.35px;top:597.00px;font-size:11px;line-height:15px;color:#f3effa;letter-spacing:0.900px;">30</span>
<span class="t" style="left:1170.35px;top:659.30px;font-size:12px;line-height:16px;color:#f3effa;letter-spacing:0.450px;">34%</span>
<span class="t" style="left:1221.85px;top:683.50px;font-size:12px;line-height:16px;color:#ffffff;letter-spacing:-0.225px;">19:36</span>
<span class="t" style="left:1205.85px;top:702.00px;font-size:12px;line-height:16px;color:#ffffff;letter-spacing:0.100px;">12/05/2015</span>
<span class="t" style="left:89.35px;top:691.00px;font-size:15px;line-height:19px;color:#f4eef0;letter-spacing:-0.386px;">Ask me anything</span>
</body></html>
